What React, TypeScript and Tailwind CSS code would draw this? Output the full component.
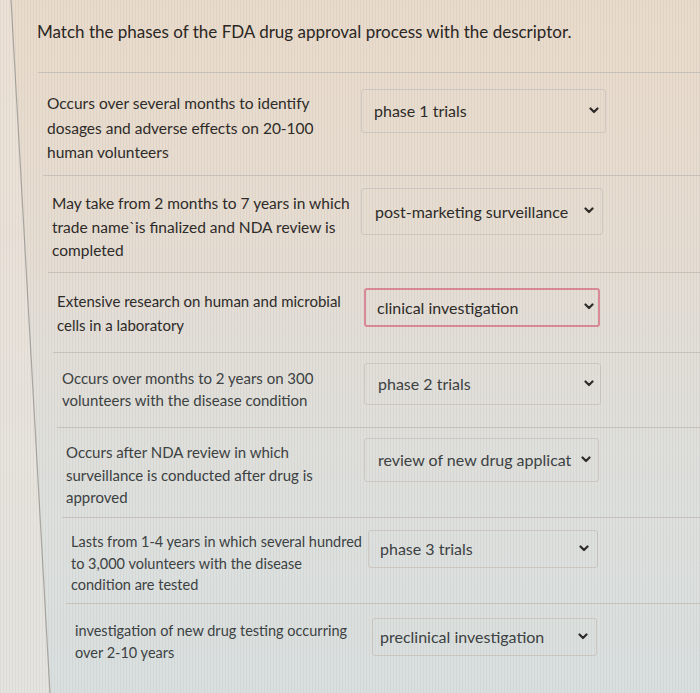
import React from "react";

type Row = {
  lines: string[];
  option: string;
  sepX: number;
  textW: number;
  pt: number;
  lh: string;
  fs: string;
  h: string;
  ddMt: string;
  ddW: string;
  ddH: string;
  ddPl: string;
  ddPr: string;
  invalid?: boolean;
};

// per-row values follow the photo's perspective (rows drift right as they go down)
const rows: Row[] = [
  {
    lines: ["Occurs over several months to identify", "dosages and adverse effects on 20-100", "human volunteers"],
    option: "phase 1 trials",
    sepX: 38, textW: 314, pt: 18, lh: "leading-[24.5px]", fs: "text-[15.5px]", h: "h-[103px]",
    ddMt: "mt-[16px]", ddW: "w-[245px]", ddH: "h-[44px]", ddPl: "pl-[12px]", ddPr: "pr-[6px]",
  },
  {
    lines: ["May take from 2 months to 7 years in which", "trade name`is finalized and NDA review is", "completed"],
    option: "post-marketing surveillance",
    sepX: 43, textW: 309, pt: 16, lh: "leading-[23.5px]", fs: "text-[15.5px]", h: "h-[97px]",
    ddMt: "mt-[12px]", ddW: "w-[242px]", ddH: "h-[47px]", ddPl: "pl-[13px]", ddPr: "pr-[8px]",
  },
  {
    lines: ["Extensive research on human and microbial", "cells in a laboratory"],
    option: "clinical investigation",
    sepX: 48, textW: 307, pt: 16, lh: "leading-[24px]", fs: "text-[15px]", h: "h-[80px]",
    ddMt: "mt-[15px]", ddW: "w-[236px]", ddH: "h-[39px]", ddPl: "pl-[11px]", ddPr: "pr-[4px]",
    invalid: true,
  },
  {
    lines: ["Occurs over months to 2 years on 300", "volunteers with the disease condition"],
    option: "phase 2 trials",
    sepX: 53, textW: 302, pt: 15, lh: "leading-[21.5px]", fs: "text-[15px]", h: "h-[75px]",
    ddMt: "mt-[10px]", ddW: "w-[237px]", ddH: "h-[42px]", ddPl: "pl-[13px]", ddPr: "pr-[6px]",
  },
  {
    lines: ["Occurs after NDA review in which", "surveillance is conducted after drug is", "approved"],
    option: "review of new drug applicat",
    sepX: 57, textW: 298, pt: 13, lh: "leading-[22.5px]", fs: "text-[15px]", h: "h-[90px]",
    ddMt: "mt-[10px]", ddW: "w-[235px]", ddH: "h-[44px]", ddPl: "pl-[13px]", ddPr: "pr-[7px]",
  },
  {
    lines: ["Lasts from 1-4 years in which several hundred", "to 3,000 volunteers with the disease", "condition are tested"],
    option: "phase 3 trials",
    sepX: 62, textW: 297, pt: 13, lh: "leading-[21.5px]", fs: "text-[14.5px]", h: "h-[86px]",
    ddMt: "mt-[12px]", ddW: "w-[230px]", ddH: "h-[38px]", ddPl: "pl-[11px]", ddPr: "pr-[8px]",
  },
  {
    lines: ["investigation of new drug testing occurring", "over 2-10 years"],
    option: "preclinical investigation",
    sepX: 66, textW: 297, pt: 16, lh: "leading-[22px]", fs: "text-[14.5px]", h: "h-[90px]",
    ddMt: "mt-[14px]", ddW: "w-[225px]", ddH: "h-[38px]", ddPl: "pl-[7px]", ddPr: "pr-[8px]",
  },
];

function Chevron() {
  return (
    <svg width="10" height="7" viewBox="0 0 10 7" className="mb-[2px] shrink-0">
      <polyline points="1.5,1.5 5,5 8.5,1.5" fill="none" stroke="#2f2c2a" strokeWidth="2.2" strokeLinecap="round" strokeLinejoin="round" />
    </svg>
  );
}

export default function App() {
  return (
    <div className="relative h-[693px] w-[700px] overflow-hidden bg-[linear-gradient(180deg,#e9dbcb_0%,#e6dcd0_30%,#e2ded8_50%,#dde0dd_75%,#d9dfdf_100%)] font-['Lato','Liberation_Sans',sans-serif]">
      {/* lighter strip left of the page edge, slanted like the photo */}
      <svg className="pointer-events-none absolute inset-0" width="700" height="693">
        <polygon points="0,0 11,0 50,693 0,693" fill="#ece6de" opacity="0.55" />
        <line x1="11" y1="0" x2="50" y2="693" stroke="#a9a6a1" strokeWidth="1.2" />
      </svg>

      <div className="relative">
        {/* question title */}
        <div className="flex h-[72px] items-center pl-[37px] pb-[8px] text-[17px] text-[#2b2724]">
          Match the phases of the FDA drug approval process with the descriptor.
        </div>

        {rows.map((r, i) => (
          <div key={i} className={`${r.h} border-t border-[#c9c3bb]`} style={{ marginLeft: r.sepX }}>
            <div className="flex pl-[9px]">
              <div
                className={`shrink-0 ${r.fs} ${r.lh} ${i < 3 ? "text-[#2e2b29]" : "text-[#3d4243]"}`}
                style={{ width: r.textW, paddingTop: r.pt }}
              >
                {r.lines.map((l, j) => (
                  <div key={j} className="whitespace-nowrap">{l}</div>
                ))}
              </div>
              <div
                className={`${r.ddMt} ${r.ddW} ${r.ddH} ${r.ddPl} ${r.ddPr} flex shrink-0 items-center gap-[8px] rounded-[3px] ${
                  r.invalid ? "border-2 border-[#d98a96]" : "border border-[#cdc8c1]"
                }`}
              >
                <span className={`min-w-0 flex-1 whitespace-nowrap text-[16px] ${i < 3 ? "text-[#2e2b29]" : "text-[#3d4243]"}`}>
                  {r.option}
                </span>
                <Chevron />
              </div>
            </div>
          </div>
        ))}
      </div>

      {/* faint vertical screen stripes */}
      <div className="pointer-events-none absolute inset-0 bg-[repeating-linear-gradient(90deg,rgba(0,0,0,0.035)_0px,rgba(0,0,0,0.035)_1px,transparent_1px,transparent_3px)]" />
    </div>
  );
}
